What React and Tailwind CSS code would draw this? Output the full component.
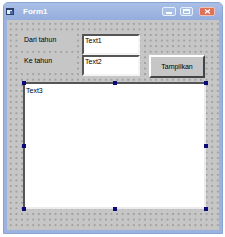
import React from 'react'

const Handle = ({ className }) => (
	<div className={`absolute w-[4px] h-[4px] bg-[#0a0a78] ${className}`} />
)

const App = () => {
	return (
		<div className="w-[225px] h-[237px] bg-white font-['Liberation_Sans',Arial,sans-serif] text-[7px] leading-[8px] text-black">
			<div className="ml-[3px] mt-[2px] w-[220px] h-[232px] flex flex-col rounded-t-[5px] bg-[#9cb3df] px-[3px] pb-[3px] border border-[#89a3d3]">
				{/* title bar */}
				<div className="h-[17px] flex items-center pl-[2px] pr-[4px] shrink-0 bg-gradient-to-b from-[#a9bfe7] to-[#95addc] -mx-[3px] px-[5px] rounded-t-[4px]">
					<svg width="8" height="7" viewBox="0 0 8 7" className="shrink-0">
						<rect x="0" y="0" width="8" height="7" fill="#2b3f66" />
						<rect x="1" y="2" width="5" height="4" fill="#e8eef8" />
						<rect x="4" y="3" width="3" height="3" fill="#4a6aa8" />
					</svg>
					<span className="ml-[9px] text-[8px] font-bold text-white leading-[10px]">Form1</span>
					<div className="flex-1" />
					<div className="flex items-center gap-[4px] mr-[3px]">
						<div className="w-[14px] h-[9px] rounded-[2px] border border-[#e6eefa] bg-[#a8bfe6] flex items-end justify-center pb-[1px]">
							<div className="w-[6px] h-[2px] bg-white" />
						</div>
						<div className="w-[13px] h-[9px] rounded-[2px] border border-[#e6eefa] bg-[#a8bfe6] flex items-center justify-center">
							<div className="w-[7px] h-[5px] border border-white border-t-2" />
						</div>
						<div className="ml-[2px] w-[16px] h-[9px] rounded-[2px] border border-[#f3c2b4] bg-[#df6f55] flex items-center justify-center">
							<svg width="7" height="5" viewBox="0 0 7 5">
								<path d="M1 0.5 L6 4.5 M6 0.5 L1 4.5" stroke="#fff" strokeWidth="1.3" />
							</svg>
						</div>
					</div>
				</div>

				{/* client area */}
				<div className="flex-1 bg-[#c6c6c6] bg-[radial-gradient(circle,#8e8e8e_0.55px,transparent_0.9px)] bg-[length:5.6px_5.6px] bg-[position:1px_1px] pl-[13px] pt-[12px]">
					<div className="flex">
						<div className="w-[62px] flex flex-col">
							<div className="w-[57px] h-[19px] bg-[#c6c6c6] pl-[4px] pt-[4px]">Dari tahun</div>
							<div className="w-[57px] h-[19px] mt-[2px] bg-[#c6c6c6] pl-[4px] pt-[4px]">Ke tahun</div>
						</div>
						<div className="w-[58px] mt-[2px] flex flex-col">
							<div className="h-[21px] bg-white border-2 border-t-[#555] border-l-[#555] border-b-[#f4f4f4] border-r-[#f4f4f4] pl-[1px] pt-[1px]">Text1</div>
							<div className="h-[21px] bg-white border-2 border-t-[#555] border-l-[#555] border-b-[#f4f4f4] border-r-[#f4f4f4] pl-[1px] pt-[1px]">Text2</div>
						</div>
						<div className="ml-[9px] mt-[23px] w-[56px] h-[23px] bg-[#c6c6c6] border-2 border-t-white border-l-white border-b-[#444] border-r-[#444] flex items-center justify-center">
							Tampilkan
						</div>
					</div>

					<div className="relative ml-[3px] mt-[4px] w-[183px] h-[127px] bg-white border-2 border-t-[#555] border-l-[#555] border-b-[#ececec] border-r-[#ececec] pl-[1px] pt-[3px]">
						Text3
						<Handle className="-left-[3px] -top-[3px]" />
						<Handle className="left-1/2 -translate-x-1/2 -top-[3px]" />
						<Handle className="-right-[4px] -top-[3px]" />
						<Handle className="-left-[3px] top-1/2 -translate-y-1/2" />
						<Handle className="-right-[4px] top-1/2 -translate-y-1/2" />
						<Handle className="-left-[3px] -bottom-[4px]" />
						<Handle className="left-1/2 -translate-x-1/2 -bottom-[4px]" />
						<Handle className="-right-[4px] -bottom-[4px]" />
					</div>
				</div>
			</div>
		</div>
	)
}

export default App
